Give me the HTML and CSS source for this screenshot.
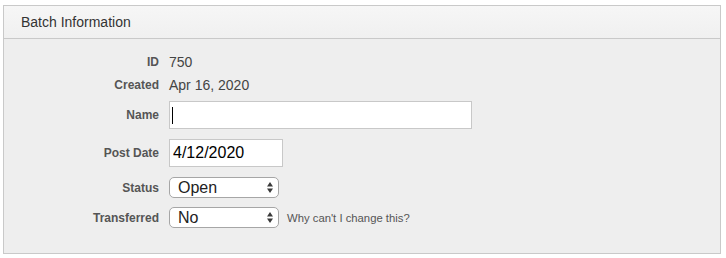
FILE: index.html
```html
<!DOCTYPE html>
<html lang="en">
<head>
    <meta charset="UTF-8">
    <meta name="viewport" content="width=device-width, initial-scale=1.0">
    <title>Batch Information</title>
    <link rel="stylesheet" href="styles.css">
</head>
<body>

    <div class="panel">
        <div class="panel-header">Batch Information</div>

        <div class="panel-body">
            <!-- read only values -->
            <div class="row row-id">
                <label class="field-label">ID</label>
                <span class="field-value">750</span>
            </div>
            <div class="row row-created">
                <label class="field-label">Created</label>
                <span class="field-value">Apr 16, 2020</span>
            </div>

            <!-- editable values -->
            <div class="row row-name">
                <label class="field-label" for="name">Name</label>
                <span class="input-wrap">
                    <input type="text" id="name" class="text-input name-input">
                    <span class="caret"></span>
                </span>
            </div>
            <div class="row row-date">
                <label class="field-label" for="postDate">Post Date</label>
                <input type="text" id="postDate" class="text-input date-input" value="4/12/2020">
            </div>
            <div class="row row-status">
                <label class="field-label" for="status">Status</label>
                <span class="select-wrap">
                    <select id="status" class="select-input">
                        <option>Open</option>
                        <option>Closed</option>
                    </select>
                    <svg class="select-arrows" width="6" height="11" viewBox="0 0 6 11">
                        <path d="M0 4.5 L3 0 L6 4.5 Z M0 6.5 L3 11 L6 6.5 Z" fill="#3a3a3a"/>
                    </svg>
                </span>
            </div>
            <div class="row row-transferred">
                <label class="field-label" for="transferred">Transferred</label>
                <span class="select-wrap">
                    <select id="transferred" class="select-input">
                        <option>No</option>
                        <option>Yes</option>
                    </select>
                    <svg class="select-arrows" width="6" height="11" viewBox="0 0 6 11">
                        <path d="M0 4.5 L3 0 L6 4.5 Z M0 6.5 L3 11 L6 6.5 Z" fill="#3a3a3a"/>
                    </svg>
                </span>
                <span class="help-text">Why can't I change this?</span>
            </div>
        </div>
    </div>

</body>
</html>
```

FILE: styles.css
```css
body {
    font-family: "Liberation Sans", Arial, sans-serif;
    background-color: #fff;
    margin: 0;
    padding: 5px 0 0 3px;
}
.panel {
    width: 718px;
    box-sizing: border-box;
    border: 1px solid #c9c9c9;
    background-color: #eeeeee;
}
.panel-header {
    height: 32px;
    line-height: 32px;
    padding-left: 17px;
    font-size: 14px;
    color: #333;
    background: linear-gradient(#f6f6f6, #f0f0f0);
    border-bottom: 1px solid #c9c9c9;
}
.panel-body {
    padding: 13px 0 25px 0;
}
.row {
    display: flex;
    align-items: center;
    gap: 10px;
}
.row-id,
.row-created {
    height: 20px;
}
.row-created {
    margin-top: 3px;
}
.row-name {
    margin-top: 6px;
}
.row-date {
    margin-top: 10px;
}
.row-status {
    margin-top: 10px;
}
.row-transferred {
    margin-top: 9px;
}
.field-label {
    width: 155px;
    text-align: right;
    font-size: 12px;
    font-weight: bold;
    color: #555;
}
.field-value {
    font-size: 14px;
    color: #444;
}
.input-wrap {
    position: relative;
    display: inline-block;
    height: 28px;
}
.caret {
    position: absolute;
    left: 3px;
    top: 6px;
    width: 1px;
    height: 17px;
    background-color: #000;
}
.text-input {
    box-sizing: border-box;
    height: 28px;
    margin: 0;
    padding: 0 3px;
    border: 1px solid #c8c8c8;
    background-color: #fff;
    font-family: "Liberation Sans", Arial, sans-serif;
    font-size: 16px;
    color: #000;
    outline: none;
}
.name-input {
    width: 303px;
}
.date-input {
    width: 114px;
}
.select-wrap {
    position: relative;
    display: inline-block;
    height: 21px;
}
.select-input {
    appearance: none;
    -webkit-appearance: none;
    box-sizing: border-box;
    width: 110px;
    height: 21px;
    margin: 0;
    padding: 0 16px 0 8px;
    border: 1px solid #a6a6a6;
    border-radius: 5px;
    background-color: #fff;
    font-family: "Liberation Sans", Arial, sans-serif;
    font-size: 16px;
    color: #222;
    outline: none;
}
.select-arrows {
    position: absolute;
    right: 6px;
    top: 5px;
    pointer-events: none;
}
.help-text {
    margin-left: -2px;
    font-size: 11.3px;
    color: #555;
}
```
